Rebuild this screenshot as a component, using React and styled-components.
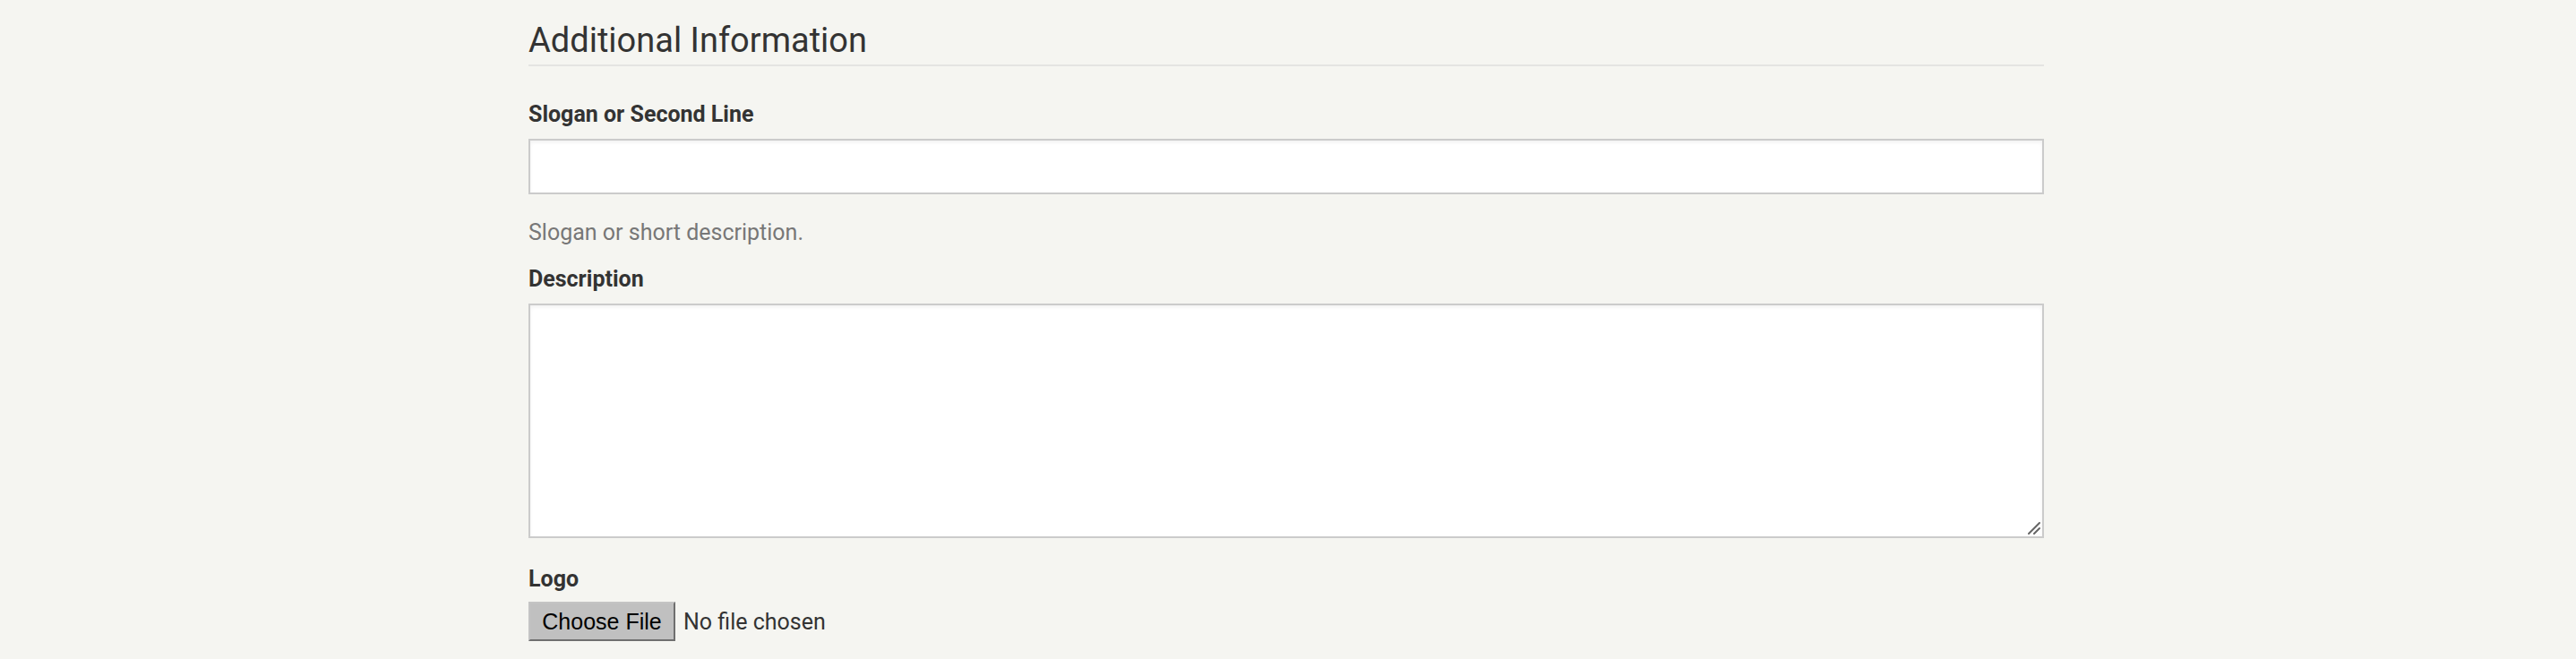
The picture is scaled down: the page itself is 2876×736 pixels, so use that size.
import React from 'react';
import styled, { createGlobalStyle } from 'styled-components';

const GlobalStyle = createGlobalStyle`
  html, body {
    margin: 0;
    padding: 0;
    background: #f5f5f1;
  }
  body {
    font-family: Roboto, "Liberation Sans", Arial, sans-serif;
    color: #333;
    -webkit-font-smoothing: antialiased;
  }
`;

const Page = styled.div`
  box-sizing: border-box;
  width: 1692px;
  margin-left: calc(50% - 848px);
  padding-top: 23px;
`;

const SectionTitle = styled.h2`
  margin: 0 0 38px;
  padding-bottom: 5px;
  border-bottom: 2px solid #e4e4e2;
  font-size: 38px;
  line-height: 44px;
  font-weight: 400;
  color: #333;
`;

const Field = styled.div`
  display: flex;
  flex-direction: column;
  margin-bottom: ${props => props.gap || 0}px;
`;

const Label = styled.label`
  font-size: 25px;
  line-height: 31px;
  font-weight: 700;
  color: #333;
  margin-bottom: ${props => (props.$tight ? 10 : 12)}px;
`;

const inputBase = `
  box-sizing: border-box;
  width: 100%;
  border: 2px solid #cbcbcb;
  background: #fff;
  box-shadow: inset 0 2px 4px rgba(0, 0, 0, 0.06);
  font-family: Roboto, sans-serif;
  font-size: 25px;
  padding: 8px 12px;
  outline: none;
  margin: 0;
  display: block;
`;

const TextInput = styled.input`
  ${inputBase}
  height: 62px;
`;

const AreaWrap = styled.div`
  position: relative;
`;

const TextArea = styled.textarea`
  ${inputBase}
  height: 262px;
  resize: none;
`;

const Grip = styled.svg`
  position: absolute;
  right: 4px;
  bottom: 4px;
  width: 14px;
  height: 14px;
  pointer-events: none;
`;

const HelpText = styled.p`
  margin: 27px 0 21px;
  font-size: 25px;
  line-height: 31px;
  color: #777;
`;

const FileRow = styled.div`
  display: flex;
  align-items: center;
  gap: 9px;
`;

const FileButton = styled.button`
  box-sizing: border-box;
  width: 164px;
  height: 44px;
  padding: 0;
  background: #c0c0c0;
  border: 2px solid #c4c4c4;
  border-right-color: #6f6f6f;
  border-bottom-color: #6f6f6f;
  border-radius: 0;
  font-family: "Liberation Sans", Arial, sans-serif;
  font-size: 25px;
  line-height: 38px;
  color: #000;
  cursor: pointer;
`;

const FileName = styled.span`
  font-size: 25px;
  color: #333;
`;

const HiddenInput = styled.input`
  display: none;
`;

export default function App() {
  return (
    <>
      <GlobalStyle />
      <Page>
        <SectionTitle>Additional Information</SectionTitle>
        <Field>
          <Label htmlFor="slogan">Slogan or Second Line</Label>
          <TextInput id="slogan" type="text" />
        </Field>
        <HelpText>Slogan or short description.</HelpText>
        <Field gap={30}>
          <Label htmlFor="description">Description</Label>
          <AreaWrap>
            <TextArea id="description" />
            <Grip viewBox="0 0 14 14">
              <path d="M1 13 L13 1 M7 13 L13 7" stroke="#666" strokeWidth="2" strokeLinecap="round" />
            </Grip>
          </AreaWrap>
        </Field>
        <Field>
          <Label htmlFor="logo" $tight>Logo</Label>
          <FileRow>
            <FileButton type="button">Choose File</FileButton>
            <FileName>No file chosen</FileName>
            <HiddenInput id="logo" type="file" />
          </FileRow>
        </Field>
      </Page>
    </>
  );
}
